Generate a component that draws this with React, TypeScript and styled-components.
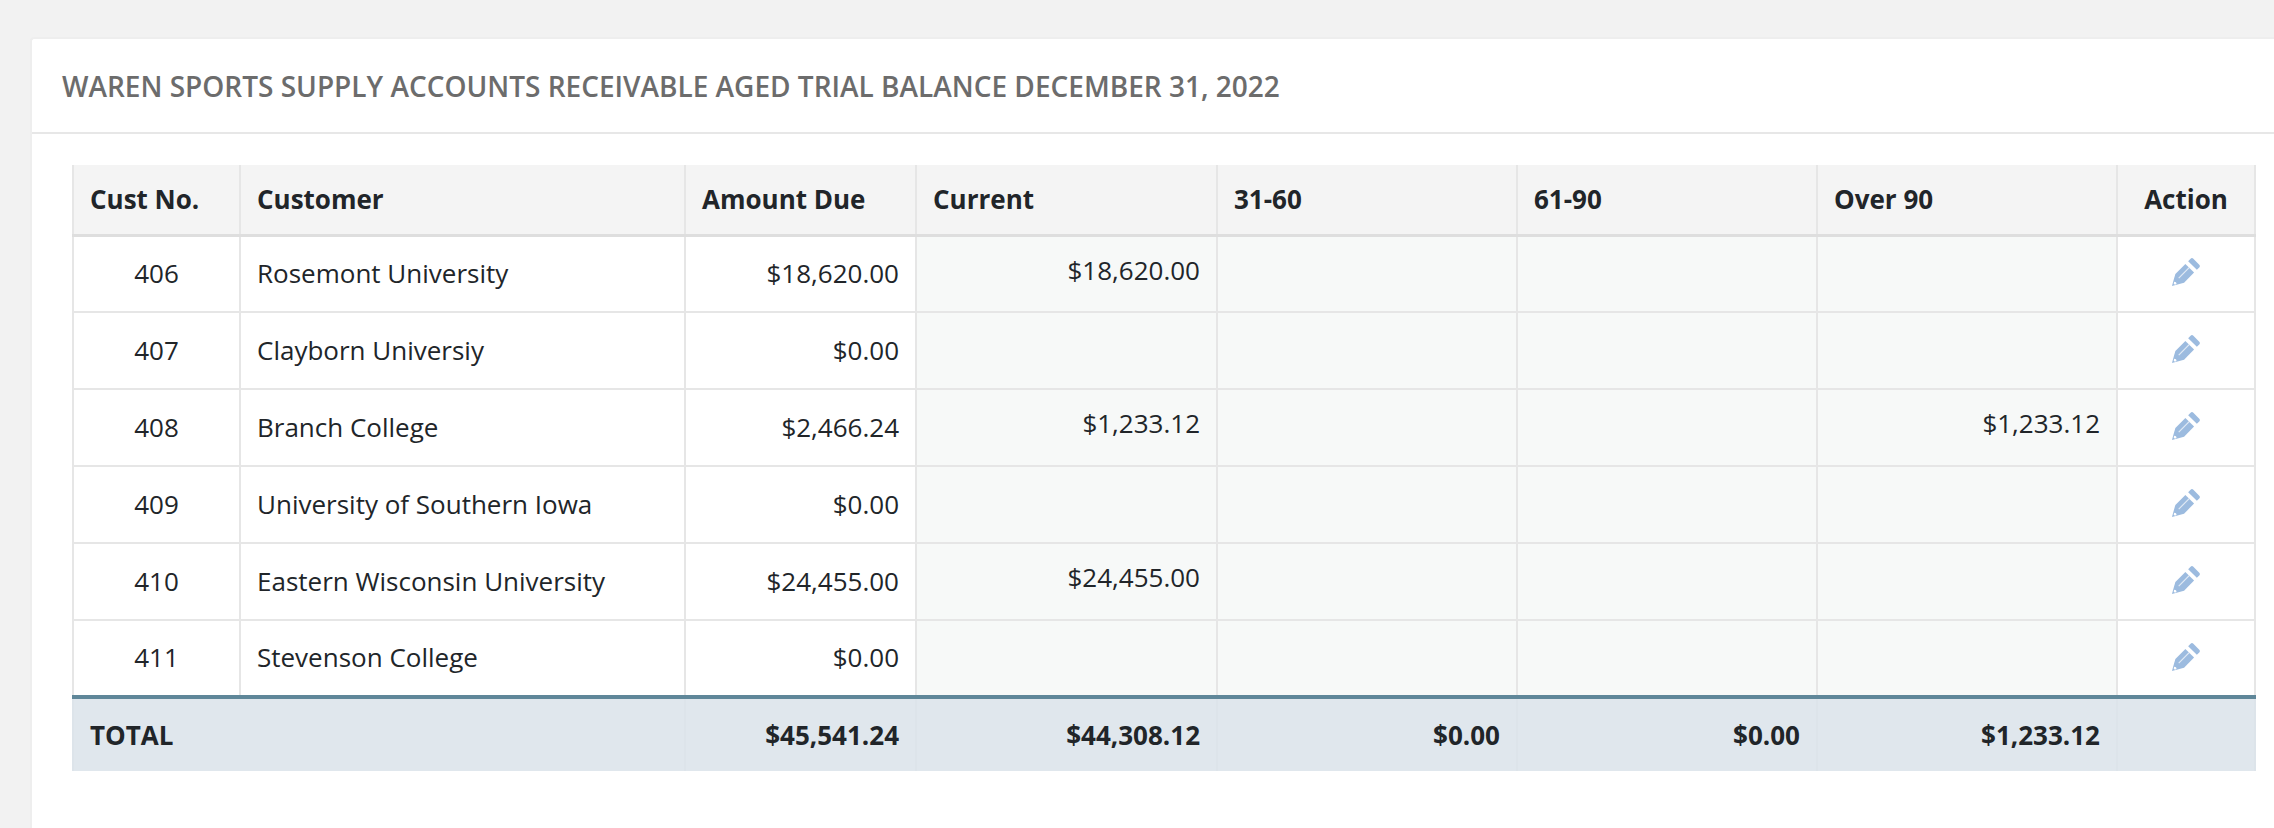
import React from 'react';
import styled, { createGlobalStyle } from 'styled-components';

const Global = createGlobalStyle`
  html, body { margin: 0; padding: 0; background: #f2f2f2; overflow: hidden; }
  body { font-family: "Open Sans", "Noto Sans", sans-serif; color: #212529; }
`;
const Page = styled.div`
  padding: 37px 0 0 30px;
  width: 2244px;
  height: 791px;
`;
const Card = styled.section`
  background: #fff;
  height: 100%;
  border: 2px solid #eeeeee;
  border-bottom: 0;
  border-right: 0;
  border-radius: 4px 0 0 0;
  box-sizing: border-box;
`;
const CardHeader = styled.header`
  height: 95px;
  box-sizing: border-box;
  display: flex;
  align-items: center;
  padding: 0 30px;
  border-bottom: 2px solid #e7e7e7;
`;
const Title = styled.h1`
  margin: 0;
  font-size: 28px;
  font-weight: 600;
  color: #6c6c6c;
`;
const CardBody = styled.div`
  padding: 31px 0 0 40px;
`;
const Table = styled.table`
  table-layout: fixed;
  width: 2183px;
  border-collapse: collapse;
  font-size: 26px;
`;
const HeadCell = styled.th<{ $center?: boolean }>`
  height: 70px;
  padding: 0 16px;
  box-sizing: border-box;
  background: #f4f4f4;
  border: 2px solid #e6e6e6;
  border-top: 0;
  border-bottom: 3px solid #dedede;
  text-align: ${(p) => (p.$center ? 'center' : 'left')};
  font-weight: 700;
  color: #212529;
`;
const Cell = styled.td<{ $align?: string; $shade?: boolean; $raised?: boolean }>`
  height: 77px;
  padding: ${(p) => (p.$raised ? '15px 16px 0' : '0 16px 2px')};
  box-sizing: border-box;
  border: 2px solid #e6e6e6;
  text-align: ${(p) => p.$align || 'left'};
  background: ${(p) => (p.$shade ? '#f7f9f8' : '#fff')};
  vertical-align: ${(p) => (p.$raised ? 'top' : 'middle')};
`;
const TotalCell = styled.td<{ $right?: boolean }>`
  height: 74px;
  padding: 0 16px;
  box-sizing: border-box;
  background: #e0e7ed;
  border-left: 2px solid #dde4ea;
  border-right: 2px solid #dde4ea;
  border-top: 4px solid #5f8799;
  text-align: ${(p) => (p.$right ? 'right' : 'left')};
  font-weight: 700;
`;
const EditIcon = styled.svg`
  width: 29px;
  height: 29px;
  display: block;
  margin: 0 0 0 37px;
  fill: #9cbbdf;
`;

const widths = [167, 445, 231, 301, 300, 300, 300, 138];
const rows = [
  ['406', 'Rosemont University', '$18,620.00', '$18,620.00', ''],
  ['407', 'Clayborn Universiy', '$0.00', '', ''],
  ['408', 'Branch College', '$2,466.24', '$1,233.12', '$1,233.12'],
  ['409', 'University of Southern Iowa', '$0.00', '', ''],
  ['410', 'Eastern Wisconsin University', '$24,455.00', '$24,455.00', ''],
  ['411', 'Stevenson College', '$0.00', '', ''],
];

const Pencil = () => (
  <EditIcon viewBox="0 0 24 24" aria-hidden="true">
    <path d="M14.2 2.6l2-2c.7-.7 1.6-.7 2.3 0l4.9 4.9c.7.7.7 1.6 0 2.3l-2 2z" />
    <path d="M11.9 4.9l7.2 7.2-8.3 8.3-10 2.8 2.8-10z" />
    <path d="M6.4 16.6L15 8" stroke="#e2ebf5" strokeWidth="1" fill="none" />
    <path d="M2.6 19.6l1.6.4.4 1.6-1.4.5-1-1z" fill="#fff" />
  </EditIcon>
);

export default function App() {
  return (
    <Page>
      <Global />
      <Card>
        <CardHeader>
          <Title>WAREN SPORTS SUPPLY ACCOUNTS RECEIVABLE AGED TRIAL BALANCE DECEMBER 31, 2022</Title>
        </CardHeader>
        <CardBody>
          <Table>
            <colgroup>
              {widths.map((w, i) => (
                <col key={i} width={w} />
              ))}
            </colgroup>
            <thead>
              <tr>
                <HeadCell>Cust No.</HeadCell>
                <HeadCell>Customer</HeadCell>
                <HeadCell>Amount Due</HeadCell>
                <HeadCell>Current</HeadCell>
                <HeadCell>31-60</HeadCell>
                <HeadCell>61-90</HeadCell>
                <HeadCell>Over 90</HeadCell>
                <HeadCell $center>Action</HeadCell>
              </tr>
            </thead>
            <tbody>
              {rows.map((r) => (
                <tr key={r[0]}>
                  <Cell $align="center">{r[0]}</Cell>
                  <Cell>{r[1]}</Cell>
                  <Cell $align="right">{r[2]}</Cell>
                  <Cell $align="right" $shade $raised>{r[3]}</Cell>
                  <Cell $shade />
                  <Cell $shade />
                  <Cell $align="right" $shade $raised>{r[4]}</Cell>
                  <Cell><Pencil /></Cell>
                </tr>
              ))}
            </tbody>
            <tfoot>
              <tr>
                <TotalCell colSpan={2}>TOTAL</TotalCell>
                <TotalCell $right>$45,541.24</TotalCell>
                <TotalCell $right>$44,308.12</TotalCell>
                <TotalCell $right>$0.00</TotalCell>
                <TotalCell $right>$0.00</TotalCell>
                <TotalCell $right>$1,233.12</TotalCell>
                <TotalCell />
              </tr>
            </tfoot>
          </Table>
        </CardBody>
      </Card>
    </Page>
  );
}
